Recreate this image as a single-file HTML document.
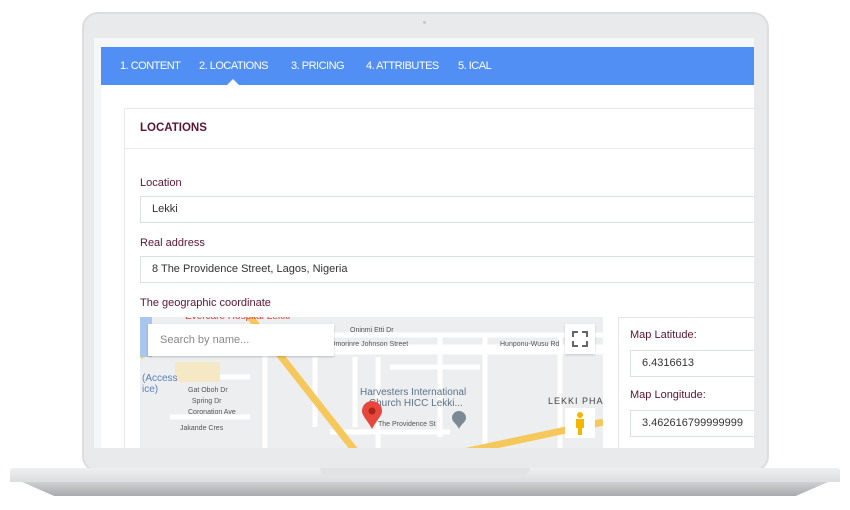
<!DOCTYPE html>
<html><head><meta charset="utf-8"><style>
*{margin:0;padding:0;box-sizing:border-box}
body{width:850px;height:510px;background:#fff;position:relative;overflow:hidden;font-family:"Liberation Sans",sans-serif}
.abs{position:absolute;white-space:nowrap}
.lid{left:82px;top:12px;width:687px;height:460px;border-radius:16px;background:#e9eaec;border:2px solid #dcdde0}
.cam{left:423px;top:21px;width:3px;height:3px;border-radius:50%;background:#c8c8c8}
.screen{left:94px;top:38px;width:660px;height:410px;background:#f6f7f8;overflow:hidden}
.bar{left:7px;top:9px;width:653px;height:38px;background:#528ff5}
.tab{position:absolute;top:13px;color:#fff;font-size:11px;letter-spacing:-0.5px}
.card{left:30px;top:70px;width:640px;height:360px;background:#fff;border:1px solid #e6e8ea}
.lbl{position:absolute;color:#5a1533;font-size:11px}
.inp{position:absolute;background:#fff;border:1px solid #dde0e3;font-size:11px;color:#333;padding-left:11px;line-height:24px}
.base{left:10px;top:468px;width:830px;height:14px;background:linear-gradient(#eeeff0,#dcdddf);border-radius:3px 3px 0 0}
.base2{left:22px;top:482px;width:806px;height:14px;background:linear-gradient(#cfd0d2,#a9aaad);clip-path:polygon(0 0,100% 0,96% 100%,4% 100%)}
</style></head><body>
<div class="abs lid"></div>
<div class="abs cam"></div>
<div class="abs screen">
 <div class="abs bar">
  <span class="tab" style="left:19px">1. CONTENT</span>
  <span class="tab" style="left:98px">2. LOCATIONS</span>
  <span class="tab" style="left:190px">3. PRICING</span>
  <span class="tab" style="left:265px">4. ATTRIBUTES</span>
  <span class="tab" style="left:357px">5. ICAL</span>
  <div class="abs" style="left:126px;top:32px;width:0;height:0;border-left:6px solid transparent;border-right:6px solid transparent;border-bottom:6px solid #fff"></div>
 </div>
 <div class="abs" style="left:7px;top:47px;width:653px;height:363px;background:#fff"></div>
 <div class="abs card">
  <div class="abs" style="left:15px;top:13px;font-size:11.5px;font-weight:bold;color:#5a1533">LOCATIONS</div>
  <div class="abs" style="left:0;top:39px;width:640px;height:1px;background:#e8eaec"></div>
  <span class="lbl" style="left:15px;top:68px">Location</span>
  <div class="inp" style="left:15px;top:87px;width:630px;height:27px">Lekki</div>
  <span class="lbl" style="left:15px;top:128px">Real address</span>
  <div class="inp" style="left:15px;top:147px;width:630px;height:27px">8 The Providence Street, Lagos, Nigeria</div>
  <span class="lbl" style="left:15px;top:188px">The geographic coordinate</span>
  <div class="abs" style="left:15px;top:208px;width:463px;height:140px;background:#eceeef;overflow:hidden">
   <svg width="463" height="140" style="position:absolute;left:0;top:0">
    <g stroke="#fff" stroke-width="5" fill="none">
     <path d="M0 30 H463"/><path d="M150 18 H463"/><path d="M160 35 H463"/><path d="M190 115 H310"/>
     <path d="M125 20 V140"/><path d="M175 40 V110"/><path d="M215 40 V110"/><path d="M238 40 V140"/><path d="M300 20 V120"/><path d="M345 20 V140"/><path d="M420 20 V140"/>
     <path d="M40 60 H110"/><path d="M30 100 H110"/><path d="M250 50 H340"/>
    </g>
    <path d="M0 40 L30 20 L100 10" stroke="#f9d67a" stroke-width="6" fill="none"/>
    <path d="M110 0 L220 140" stroke="#f6c75a" stroke-width="7" fill="none"/>
    <path d="M300 140 L463 105" stroke="#f6c75a" stroke-width="7" fill="none"/>
    <rect x="0" y="0" width="12" height="40" fill="#a9c6f0"/>
    <rect x="35" y="45" width="45" height="20" fill="#f5e9c5"/>
   </svg>
   <div class="abs" style="left:45px;top:-6px;font-size:10px;color:#d8403a">Evercare Hospital Lekki</div>
   <div class="abs" style="left:210px;top:10px;font-size:7px;color:#555">Oninmi Etti Dr</div>
   <div class="abs" style="left:190px;top:24px;font-size:7px;color:#555">Omorinre Johnson Street</div>
   <div class="abs" style="left:360px;top:24px;font-size:7px;color:#555">Hunponu-Wusu Rd</div>
   <div class="abs" style="left:2px;top:56px;font-size:10px;color:#5b7fc9;line-height:11px">(Access<br>ice)</div>
   <div class="abs" style="left:48px;top:68px;font-size:7px;color:#555;line-height:11px">Gat Oboh Dr<br>&nbsp;&nbsp;Spring Dr<br>Coronation Ave</div>
   <div class="abs" style="left:40px;top:108px;font-size:7px;color:#555">Jakande Cres</div>
   <div class="abs" style="left:220px;top:70px;font-size:10px;color:#5d7389;line-height:11px;text-align:center">Harvesters International<br>&nbsp;&nbsp;Church HICC Lekki...</div>
   <div class="abs" style="left:238px;top:104px;font-size:7px;color:#555">The Providence St</div>
   <div class="abs" style="left:408px;top:79px;font-size:9px;color:#444;letter-spacing:1px">LEKKI PHA</div>
   <svg class="abs" style="left:222px;top:84px" width="20" height="28"><path d="M10 28 C6 20 0 15 0 10 A10 10 0 0 1 20 10 C20 15 14 20 10 28Z" fill="#e8453c"/><circle cx="10" cy="10" r="3.5" fill="#a52714"/></svg>
   <svg class="abs" style="left:312px;top:94px" width="14" height="18"><path d="M7 18 C5 13 0 11 0 7 A7 7 0 0 1 14 7 C14 11 9 13 7 18Z" fill="#7b8a94"/></svg>
   <div class="abs" style="left:8px;top:7px;width:186px;height:32px;background:#fff;box-shadow:0 1px 2px rgba(0,0,0,.2);font-size:11px;color:#888;padding:10px 0 0 12px">Search by name...</div>
   <div class="abs" style="left:425px;top:7px;width:30px;height:30px;background:#fff;box-shadow:0 1px 2px rgba(0,0,0,.2)">
    <svg width="30" height="30"><path d="M8 13V8h5M17 8h5v5M22 17v5h-5M13 22H8v-5" stroke="#666" stroke-width="2" fill="none"/></svg></div>
   <div class="abs" style="left:425px;top:91px;width:30px;height:30px;background:#fff">
    <svg width="30" height="30"><circle cx="15" cy="7" r="3" fill="#f5b400"/><path d="M11 11h8v9h-2v7h-4v-7h-2z" fill="#f5b400"/></svg></div>
  </div>
  <div class="abs" style="left:493px;top:208px;width:150px;height:140px;border:1px solid #e3e5e7;background:#fff">
   <span class="lbl" style="left:11px;top:11px">Map Latitude:</span>
   <div class="inp" style="left:11px;top:32px;width:140px;height:27px">6.4316613</div>
   <span class="lbl" style="left:11px;top:71px">Map Longitude:</span>
   <div class="inp" style="left:11px;top:92px;width:140px;height:27px">3.462616799999999</div>
  </div>
 </div>
</div>
<div class="abs base"></div>
<div class="abs" style="left:320px;top:468px;width:210px;height:7px;background:#e2e3e5;border-radius:0 0 8px 8px"></div>
<div class="abs base2"></div>
</body></html>
